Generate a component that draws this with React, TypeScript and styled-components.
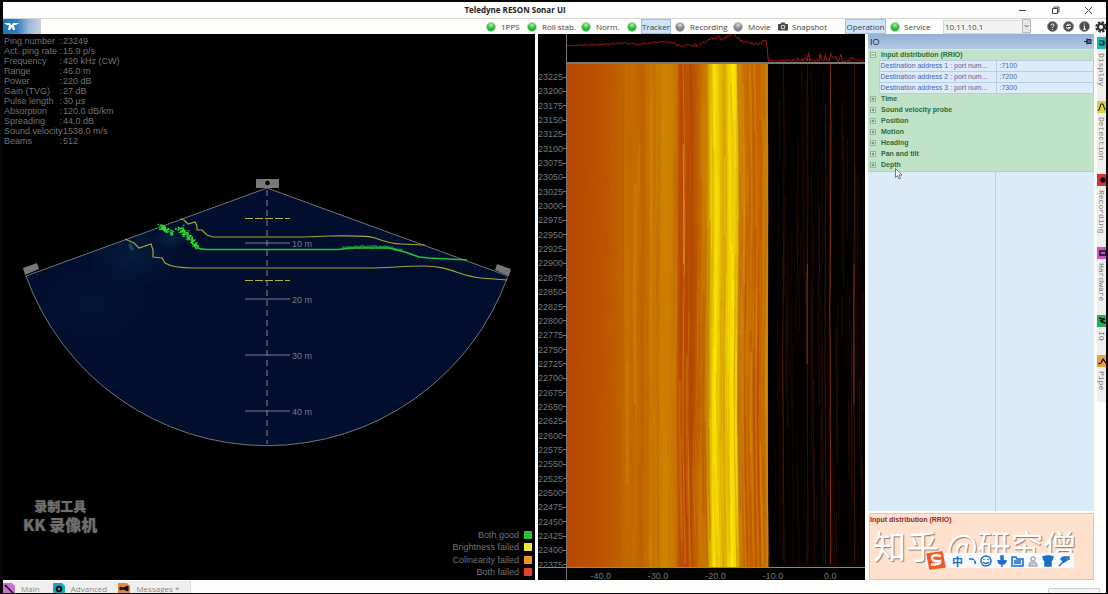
import React from 'react';
import styled, { createGlobalStyle } from 'styled-components';

const sans = '"Liberation Sans", Arial, sans-serif';
const ui = '"Open Sans", "Noto Sans", sans-serif';
const cjk = '"Noto Sans CJK SC", sans-serif';

const GlobalStyle = createGlobalStyle`
  *, *::before, *::after { box-sizing: border-box; }
  body { margin: 0; background: #000; }
  button { margin: 0; padding: 0; border: 0; background: none; font: inherit; color: inherit; }
  svg { display: block; }
`;

/* ---------- window ---------- */

const Window = styled.div`
  display: flex;
  flex-direction: column;
  min-height: 100vh;
  border: solid #060606;
  border-width: 2px 2px 1px 3px;
  background: #fdfdfb;
  overflow: hidden;
  font-family: ${ui};
  color: #444;
`;

const TitleBar = styled.header`
  display: grid;
  grid-template-columns: 1fr auto 1fr;
  align-items: center;
  height: 17px;
  padding-right: 13px;
  border-bottom: 1px solid #d4d4d2;
`;

const Title = styled.h1`
  grid-column: 2;
  margin: 0 0 0 -66px;
  font-size: 8px;
  line-height: 14px;
  font-weight: 700;
  color: #222;
`;

const WindowButtons = styled.div`
  display: flex;
  justify-content: flex-end;
  gap: 24px;
`;

const ToolBar = styled.div`
  display: flex;
  align-items: stretch;
  height: 15px;
  font-size: 8px;
  line-height: 15px;
  white-space: nowrap;
`;

const Logo = styled.div`
  width: 38px;
  margin-right: auto;
  background: linear-gradient(90deg, #1878bb 0, #2f7fbe 14px, #9db8dc 26px, #ccd0e0 38px);
`;

const ToolButton = styled.button<{ $width: number }>`
  display: flex;
  align-items: center;
  gap: 4px;
  flex: none;
  width: ${(p) => p.$width}px;
  line-height: 15px;
  text-align: left;
`;

const ToolLabel = styled.span<{ $active?: boolean }>`
  height: 15px;
  padding: 0 1px;
  background: ${(p) => (p.$active ? '#cde3f7' : 'transparent')};
  box-shadow: ${(p) => (p.$active ? 'inset 0 0 0 1px #9cc3e6' : 'none')};
`;

const Led = styled.span<{ $on?: boolean }>`
  flex: none;
  width: 10px;
  height: 10px;
  border-radius: 50%;
  border: 1px solid ${(p) => (p.$on ? '#9fd8a3' : '#bdbdbd')};
  background: ${(p) =>
    p.$on
      ? 'radial-gradient(circle at 50% 25%, #b4f3ae 0, #35c143 45%, #169a2c 100%)'
      : 'radial-gradient(circle at 50% 25%, #dedede 0, #8e8e8e 45%, #6c6c6c 100%)'};
`;

const ModeButton = styled.button`
  width: 41px;
  background: #cde3f7;
  box-shadow: inset 0 0 0 1px #9cc3e6;
  line-height: 15px;
  margin-right: 4px;
`;

const AddressSelect = styled.select`
  appearance: none;
  width: 88px;
  height: 14px;
  padding: 0 1px;
  border: 1px solid #d8d8d8;
  border-radius: 0;
  background: #f3f3f2;
  font: 8px/12px ${ui};
  color: #444;
`;

const SelectWrap = styled.label`
  position: relative;
  margin-right: 16px;
  svg {
    position: absolute;
    top: 0;
    right: 0;
    pointer-events: none;
  }
`;

const ToolIcons = styled.div`
  display: flex;
  align-items: center;
  gap: 5px;
  width: 59px;
  overflow: hidden;
  button { flex: none; }
`;

/* ---------- workspace ---------- */

const Workspace = styled.main`
  flex: 1;
  display: grid;
  grid-template-columns: minmax(0, 532fr) minmax(0, 327fr) 226px 9px;
  column-gap: 3px;
  min-height: 546px;
`;

const SonarPanel = styled.section`
  position: relative;
  background: #000;
  font-family: ${sans};
`;

const SonarDrawing = styled.svg`
  width: 100%;
  height: auto;
`;

const Stats = styled.dl`
  position: absolute;
  top: 2px;
  left: 1px;
  display: grid;
  grid-template-columns: 59px auto;
  margin: 0;
  font-size: 9px;
  line-height: 10px;
  color: #727272;
  white-space: nowrap;
  dd { margin: 0; }
`;

const StatName = styled.dt<{ $colon: boolean }>`
  display: flex;
  justify-content: space-between;
  padding-right: 1px;
  &::after { content: ${(p) => (p.$colon ? "':'" : 'none')}; }
`;

const Legend = styled.ul`
  position: absolute;
  right: 3px;
  bottom: 2px;
  display: grid;
  margin: 0;
  padding: 0;
  list-style: none;
  font-size: 9px;
  line-height: 12px;
  color: #727272;
`;

const LegendItem = styled.li<{ $color: string }>`
  display: flex;
  align-items: center;
  justify-content: flex-end;
  gap: 5px;
  height: 12px;
  &:nth-child(2) { margin-bottom: 1px; }
  &::after {
    content: '';
    width: 8px;
    height: 8px;
    background: ${(p) => p.$color};
  }
`;

const RecorderMark = styled.div`
  position: absolute;
  left: 20px;
  bottom: 46px;
  font-family: ${cjk};
  font-weight: 900;
  text-align: center;
  color: #6f6f6f;
  text-shadow: 0 0 2px #333;
  p { margin: 0; font-size: 13px; line-height: 16px; }
  strong { display: block; font-size: 16px; line-height: 20px; font-weight: 900; }
`;

const Waterfall = styled.section`
  display: grid;
  grid-template: 28px 2px minmax(0, 1fr) 13px / 28px minmax(0, 1fr);
  background: #000;
  font-family: ${sans};
  color: #777;
`;

const Trace = styled.svg`
  grid-area: 1 / 2;
  width: 100%;
  height: 28px;
  border-left: 1px solid #777;
`;

const Rule = styled.div`
  grid-area: 2 / 2;
  background: #777;
`;

const PingAxis = styled.ol`
  grid-area: 3 / 1;
  display: flex;
  flex-direction: column;
  justify-content: space-between;
  margin: 0;
  padding: 6px 0 0;
  list-style: none;
  font-size: 9px;
  line-height: 14px;
  height: calc(100% + 5px);
  li { display: flex; align-items: center; height: 14px; }
  li::after { content: ''; flex: 1; height: 1px; background: #777; }
`;

const Image = styled.div`
  grid-area: 3 / 2;
  position: relative;
  border-left: 1px solid #777;
  svg { position: absolute; inset: 0; width: 100%; height: 100%; }
`;

const RangeAxis = styled.ol`
  grid-area: 4 / 1 / 5 / 3;
  display: grid;
  grid-template-columns: repeat(5, 1fr);
  position: relative;
  margin: 0;
  padding: 0 6px 0 34px;
  border-top: 1px solid #888;
  list-style: none;
  font-size: 9px;
  line-height: 16px;
  text-align: center;
  &::before { content: ''; position: absolute; left: 28px; top: 0; bottom: 0; width: 1px; background: #777; }
`;

/* ---------- property panel ---------- */

const SidePanel = styled.aside`
  display: flex;
  flex-direction: column;
  font-family: ${sans};
`;

const PanelHeader = styled.header`
  display: flex;
  align-items: center;
  justify-content: space-between;
  height: 15px;
  padding: 0 2px 0 2px;
  background: linear-gradient(#94b0d4, #b0c8e4);
  h2 { margin: 0; font-size: 9px; font-weight: 400; color: #26364c; }
`;

const PropertyTable = styled.table`
  width: 100%;
  table-layout: fixed;
  border-collapse: collapse;
  background: #c0e3c8;
  font-size: 7px;
  line-height: 10px;
  border-top: 1px solid #d6ebdd;
  th, td { height: 11px; padding: 0; white-space: nowrap; text-align: left; font-weight: 400; }
`;

const GutterCell = styled.td`
  background: #c0e3c8;
`;

const PropertyCell = styled.td`
  border: 1px solid #b7cde2;
  background: #dcebfa;
  color: #4d66a5;
  && { padding-left: 1px; }
  & + && { padding-left: 3px; }
`;

const GroupButton = styled.button`
  display: flex;
  align-items: center;
  gap: 5px;
  height: 10px;
  padding-left: 2px;
  line-height: 10px;
  font-weight: 700;
  color: #2d6b3e;
`;

const PropertySpace = styled.div`
  flex: 1;
  display: grid;
  grid-template-columns: 128px 1fr;
  background: #dcebf8;
  border-top: 1px solid #b4cfc6;
  &::before { content: ''; border-right: 1px solid #bfcfdf; }
`;

const HelpBox = styled.section`
  position: relative;
  height: 67px;
  margin: 2px 0 0 1px;
  border: 1px solid #d9c8bd;
  background: #ffe1ce;
  h3 { margin: 0; padding: 1px 0; font-size: 7px; line-height: 10px; color: #8a2f2a; }
`;

const ZhihuMark = styled.div`
  position: absolute;
  left: 3px;
  top: 8px;
  font: 400 33px/46px ${cjk};
  white-space: nowrap;
  color: #fff;
  text-shadow: 1px 1px 1px #8c7c74;
`;

const ImeBar = styled.div`
  position: absolute;
  left: 56px;
  top: 37px;
  display: flex;
  align-items: center;
  gap: 6px;
  width: 148px;
  height: 19px;
  background: linear-gradient(#fff0 2px, #f6fafe 2px 17px, #fff0 17px);
  color: #1d6fc4;
  font: 700 11px/18px ${cjk};
  svg { flex: none; }
`;

const Rail = styled.nav`
  align-self: start;
  margin-top: 1px;
  background: #eeeeec;
  overflow: hidden;
`;

const RailTab = styled.button`
  display: flex;
  flex-direction: column;
  align-items: flex-start;
  gap: 4px;
  padding: 2px 0 12px;
  width: 9px;
  font: 8px/9px "Liberation Mono", monospace;
  color: #777;
  span { writing-mode: vertical-rl; }
  svg { flex: none; }
`;

/* ---------- bottom ---------- */

const BottomBar = styled.footer`
  display: flex;
  justify-content: space-between;
  align-items: flex-end;
  height: 13px;
  padding-right: 6px;
  font-size: 8px;
`;

const BottomTabs = styled.nav`
  display: flex;
  width: 188px;
  height: 12px;
  background: #efefed;
  border-right: 1px solid #dcdcda;
  overflow: hidden;
`;

const BottomTab = styled.button<{ $width: number }>`
  display: flex;
  align-items: center;
  gap: 6px;
  width: ${(p) => p.$width}px;
  height: 15px;
  line-height: 12px;
  color: #888;
  white-space: nowrap;
  svg { flex: none; }
`;

const StatusBox = styled.div`
  width: 52px;
  height: 5px;
  border: 1px solid #ccc;
  border-bottom: 0;
  border-radius: 2px 2px 0 0;
  background: #f4f4f4;
`;

/* ---------- data ---------- */

const stats: [string, string][] = [
  ['Ping number', '23249'],
  ['Act. ping rate', '15.9 p/s'],
  ['Frequency', '420 kHz (CW)'],
  ['Range', '46.0 m'],
  ['Power', '220 dB'],
  ['Gain (TVG)', '27 dB'],
  ['Pulse length', '30 µs'],
  ['Absorption', '120.0 dB/km'],
  ['Spreading', '44.0 dB'],
  ['Sound velocity', '1538.0 m/s'],
  ['Beams', '512'],
];

const legend = [
  ['Both good', '#22c436'],
  ['Brightness failed', '#f2e23a'],
  ['Colinearity failed', '#ef9322'],
  ['Both failed', '#e2402f'],
];

const pings = Array.from({ length: 35 }, (_, i) => 23225 - i * 25);
const ranges = ['-40.0', '-30.0', '-20.0', '-10.0', '0.0'];
const groups = ['Time', 'Sound velocity probe', 'Position', 'Motion', 'Heading', 'Pan and tilt', 'Depth'];

const tools = [
  { label: '1PPS', on: true, width: 41 },
  { label: 'Roll stab.', on: true, width: 54 },
  { label: 'Norm.', on: true, width: 46 },
  { label: 'Tracker', on: true, width: 48, active: true },
  { label: 'Recording', on: false, width: 58 },
  { label: 'Movie', on: false, width: 45 },
];

function random(seed: number) {
  let s = seed;
  return () => {
    s = (s * 16807) % 2147483647;
    return s / 2147483647;
  };
}

/* ---------- drawings ---------- */

const gradientStops: [number, string][] = [
  [0, '#b84900'], [28, '#bb5000'], [48, '#bf5c00'], [60, '#c26a00'], [68, '#c36900'],
  [74, '#bd5e00'], [84, '#c67400'], [100, '#cb8000'], [109, '#c87400'], [113, '#b84a00'],
  [125, '#b54700'], [132, '#c26400'], [140, '#ca8200'], [144, '#e3bd00'], [148, '#f8df00'],
  [153, '#e6bd00'], [158, '#d9a500'], [162, '#ecc900'], [166, '#ffe600'], [169, '#f4dc00'],
  [172, '#cf9000'], [180, '#ca7000'], [190, '#c56000'], [200, '#cd7900'],
];

const streaks = (() => {
  const rnd = random(77);
  const list: { d: string; color: string; opacity: number; width: number }[] = [];
  const wave = (x: number, y0: number, y1: number) => {
    let d = '';
    for (let y = y0; y <= y1; y += 20) {
      const bend = x > 100 && x < 200 ? Math.sin(y / 75) * 1.4 + y / 250 : Math.sin(y / 60) * 0.4;
      d += `${d ? 'L' : 'M'}${(x + bend + rnd() * 0.5).toFixed(1)} ${y}`;
    }
    return d;
  };
  for (let i = 0; i < 420; i++) {
    const x = 200 * Math.pow(rnd(), 0.55);
    const y0 = Math.floor(rnd() * 480) - 60;
    const y1 = y0 + 80 + rnd() * 320;
    let color = rnd() > 0.5 ? '#e09a00' : '#b04600';
    if (x > 142 && x < 171) color = rnd() > 0.35 ? '#ffee10' : '#c98c00';
    const strength = x < 55 ? 0.04 : x < 110 ? 0.06 + rnd() * 0.1 : 0.1 + rnd() * 0.22;
    list.push({ d: wave(x, y0, y1), color, opacity: strength, width: 0.6 + rnd() * 1.4 });
  }
  for (let i = 0; i < 90; i++) {
    const x = 203 + rnd() * 95;
    const y0 = rnd() * 460;
    list.push({ d: wave(x, y0, y0 + 40 + rnd() * 200), color: '#5a2008', opacity: 0.1 + rnd() * 0.3, width: 1 });
  }
  [[241, 0, 503, 0.35], [241, 200, 300, 0.9], [264, 0, 503, 0.95], [259, 40, 503, 0.4], [288, 0, 503, 0.45], [288, 200, 340, 0.8], [217, 0, 503, 0.3]].forEach(
    ([x, y0, y1, opacity]) => list.push({ d: wave(x, y0, y1), color: '#8e3310', opacity, width: 1 }),
  );
  list.push({ d: wave(116, 0, 503), color: '#e58a20', opacity: 0.7, width: 0.8 });
  list.push({ d: wave(115, 80, 210), color: '#ffc060', opacity: 0.6, width: 0.8 });
  list.push({ d: wave(68, 120, 340), color: '#d49000', opacity: 0.45, width: 2 });
  list.push({ d: wave(60, 300, 420), color: '#d08400', opacity: 0.4, width: 4 });
  return list;
})();

const tracePath = (() => {
  const rnd = random(11);
  const shape = [
    [0, 12], [20, 11], [40, 10.5], [55, 9], [75, 10], [98, 7], [106, 9], [114, 12.5], [130, 11],
    [142, 6], [150, 3], [156, 5], [162, 1], [168, 0], [174, 6], [182, 10], [193, 9], [200, 6], [202, 25],
  ];
  let d = '';
  for (let x = 0; x <= 201; x += 1.5) {
    const k = Math.max(1, shape.findIndex((p) => p[0] >= x));
    const [ax, ay] = shape[k - 1];
    const [bx, by] = shape[k];
    const noise = (rnd() - 0.5) * (x > 110 ? 4 : 1.8);
    d += `${d ? 'L' : 'M'}${x} ${(ay + ((by - ay) * (x - ax)) / (bx - ax) + noise).toFixed(1)}`;
  }
  for (let x = 202; x <= 299; x += 1.3) {
    const near = Math.abs(x - 264) < 12 || Math.abs(x - 241) < 3 || Math.abs(x - 287) < 4;
    const h = rnd() * rnd() * (near ? 11 : 4);
    d += `L${x.toFixed(1)} ${(27.5 - h).toFixed(1)}`;
  }
  return d;
})();

const scatter = (() => {
  const rnd = random(5);
  let bright = '';
  for (let i = 0; i < 110; i++) {
    const t = rnd();
    const x = 176 + t * 18 + (rnd() - 0.5) * (9 - t * 6);
    const y = 193 + t * 20 + (rnd() - 0.5) * 5;
    bright += `M${x.toFixed(1)} ${y.toFixed(1)}h${(0.8 + rnd() * 1.6).toFixed(1)}`;
  }
  for (let i = 0; i < 60; i++) {
    const t = rnd();
    const x = 156 + t * 13 + (rnd() - 0.5) * 4;
    const y = 192 + t * 8 + (rnd() - 0.5) * 5;
    bright += `M${x.toFixed(1)} ${y.toFixed(1)}h${(0.8 + rnd() * 1.6).toFixed(1)}`;
  }
  let ridge = '';
  for (let i = 0; i < 60; i++) {
    const x = 340 + i;
    const y = 214 - Math.sin((i / 60) * 3.1) * 1.5 + (i > 45 ? (i - 45) / 5 : 0);
    ridge += `M${x} ${(y - rnd() * 2).toFixed(1)}v${(1 + rnd() * 2).toFixed(1)}`;
  }
  return { bright, ridge };
})();

function Fan() {
  return (
    <SonarDrawing viewBox="0 0 532 546" role="img" aria-label="Sonar wedge">
      <defs>
        <clipPath id="wedge">
          <path d="M264 154L23 242A256 256 0 0 0 505 242Z" />
        </clipPath>
        <radialGradient id="haze">
          <stop offset="0" stopColor="#0c3a5c" stopOpacity="0.45" />
          <stop offset="1" stopColor="#0c3a5c" stopOpacity="0" />
        </radialGradient>
      </defs>
      <path d="M264 154L23 242A256 256 0 0 0 505 242Z" fill="#010e2d" />
      <g clipPath="url(#wedge)">
        <ellipse cx="130" cy="222" rx="50" ry="36" fill="url(#haze)" opacity="0.7" />
        <ellipse cx="90" cy="270" rx="60" ry="40" fill="url(#haze)" opacity="0.4" />
        <ellipse cx="128" cy="213" rx="2" ry="4" fill="#2e6f86" opacity="0.5" transform="rotate(-25 128 213)" />
        <ellipse cx="168" cy="205" rx="18" ry="10" fill="url(#haze)" />
      </g>
      <g fill="none" stroke="#727476">
        <path d="M264 154L23 242A256 256 0 0 0 505 242Z" />
        <path d="M264 156V410" stroke="#85888f" strokeDasharray="6 4" />
        <path d="M242 209H287M242 265H287M242 321H287M242 377H287" stroke="#767c90" />
      </g>
      <g fill="none" stroke="#a8a632" strokeWidth="1.2">
        <path d="M242 184.500H287M242 246.500H287" stroke="#b5b13c" strokeDasharray="8 2" />
        <path d="M177 185L181 186L185 190L192 188L194 192L194 196L199 196L204 201L210 203H300L327 202C345 202 364 201 372 204S388 210 398 210L422 211" />
        <path d="M122 205L131 209L136 214L148 210L150 216L150 223L159 224L162 229Q170 234 190 234H364C385 234 400 232 420 232C448 232 455 242 478 244L504 246" />
      </g>
      <path d={scatter.bright} stroke="#2edc2c" strokeWidth="1.1" />
      <path d={scatter.ridge} stroke="#2aa83a" />
      <path d="M192 213Q197 215.500 204 215.500H334L350 214H386L402 218L416 223L426 224L464 226" fill="none" stroke="#1fc43b" strokeWidth="1.700" />
      <g fill="#77777a">
        <path d="M253 145h23v9h-23z" />
        <path d="M20 234l14-5 2 6-14 6zM494 230l14 5-2 7-14-6z" />
      </g>
      <circle cx="264.500" cy="149" r="3" fill="#000" stroke="#aaa" strokeWidth="0.800" />
      <g fill="#777b82" fontFamily={sans} fontSize="9">
        <text x="289" y="213">10 m</text>
        <text x="289" y="269">20 m</text>
        <text x="289" y="325">30 m</text>
        <text x="289" y="381">40 m</text>
      </g>
    </SonarDrawing>
  );
}

function BackscatterImage() {
  return (
    <svg viewBox="0 0 299 503" preserveAspectRatio="none" role="img" aria-label="Backscatter waterfall">
      <defs>
        <linearGradient id="swath" gradientUnits="userSpaceOnUse" x1="0" x2="201" y1="0" y2="0">
          {gradientStops.map(([x, c]) => (
            <stop key={x} offset={x / 201} stopColor={c} />
          ))}
        </linearGradient>
        <filter id="grain" x="0" y="0" width="100%" height="100%">
          <feTurbulence type="fractalNoise" baseFrequency="0.22 0.003" numOctaves="3" seed="4" />
          <feColorMatrix values="0 0 0 0 0.85  0 0 0 0 0.6  0 0 0 0 0  1.6 0 0 0 -0.75" />
        </filter>
      </defs>
      <rect width="299" height="503" fill="#030100" />
      <rect width="201" height="503" fill="url(#swath)" />
      <rect x="56" width="144" height="503" filter="url(#grain)" opacity="0.25" />
      {streaks.map((s, i) => (
        <path key={i} d={s.d} fill="none" stroke={s.color} strokeOpacity={s.opacity} strokeWidth={s.width} />
      ))}
      <path d="M201 0V503" stroke="#b59a4a" />
    </svg>
  );
}

const Camera = () => (
  <svg width="10" height="9" viewBox="0 0 10 9">
    <path d="M0 2h2.500l1-1.500h3L7.500 2H10v6.500H0z" fill="#4a4a4a" />
    <circle cx="5" cy="5" r="2.300" fill="#ddd" />
    <circle cx="5" cy="5" r="1.300" fill="#444" />
  </svg>
);

const roundIcons = [
  { name: 'Help', art: <path d="M4 4.500q0-1.500 1.600-1.500T7 4.300q0 1-1.400 1.700v.8M5.600 8v1" /> },
  { name: 'Refresh', art: <path d="M8 4.500Q5.500 1.800 3.500 4.500H6M3 6.500q2.500 2.700 4.500 0H5" /> },
  { name: 'Information', art: <path d="M5.500 2.500v1M4.500 5h1v3M4 8.300h3" /> },
];

function Tools() {
  return (
    <ToolBar>
      <Logo>
        <svg width="20" height="15" viewBox="0 0 20 15" aria-label="Teledyne">
          <path d="M1 4h6l1 2h1l1-2h6l-3 2h-2l1 5h-2L9 8l-2 3H5l1-5H4z" fill="#fff" />
        </svg>
      </Logo>
      {tools.map((t) => (
        <ToolButton key={t.label} $width={t.width}>
          <Led $on={t.on} />
          <ToolLabel $active={t.active}>{t.label}</ToolLabel>
        </ToolButton>
      ))}
      <ToolButton $width={67}>
        <Camera />
        <span>Snapshot</span>
      </ToolButton>
      <ModeButton>Operation</ModeButton>
      <ToolButton $width={53}>
        <Led $on />
        <span>Service</span>
      </ToolButton>
      <SelectWrap>
        <AddressSelect aria-label="Address" defaultValue="a">
          <option value="a">10.11.10.1</option>
        </AddressSelect>
        <svg width="9" height="14" viewBox="0 0 9 14">
          <path d="M.5.500h8v13h-8z" fill="#e6e6e6" stroke="#bbb" />
          <path d="M2.500 6l2 2 2-2" fill="none" stroke="#666" />
        </svg>
      </SelectWrap>
      <ToolIcons>
        {roundIcons.map((r) => (
          <button key={r.name} aria-label={r.name}>
            <svg width="11" height="11" viewBox="0 0 11 11" fill="none" stroke="#fff">
              <circle cx="5.500" cy="5.500" r="5" fill="#4c4c4c" stroke="#888" strokeWidth="0.800" />
              {r.art}
            </svg>
          </button>
        ))}
        <button aria-label="Settings">
          <svg width="12" height="12" viewBox="0 0 12 12">
            <circle cx="6" cy="6" r="4" fill="none" stroke="#333" strokeWidth="3.500" strokeDasharray="2.100 1.040" />
            <circle cx="6" cy="6" r="3" fill="#fff" stroke="#333" strokeWidth="2" />
          </svg>
        </button>
      </ToolIcons>
    </ToolBar>
  );
}

const railTabs = [
  { label: 'Display', color: '#12bdb8', art: <path d="M2 4h5v4H3V6M5 6h2" /> },
  { label: 'Detection', color: '#d9cf3f', art: <path d="M1 9h1l2-6h2l2 6" /> },
  { label: 'Recording', color: '#cf3530', art: <circle cx="6" cy="6" r="2.300" fill="#111" /> },
  { label: 'Hardware', color: '#d052c8', art: <path d="M3 4h6v4H3z" strokeWidth="1.500" /> },
  { label: 'IO', color: '#22b35a', art: <path d="M2 3l4 1-1 3 4 1M3 6l5-2" strokeWidth="1.500" /> },
  { label: 'Pipe', color: '#eaa33a', art: <path d="M1 9l3-1 2-4 3 4" strokeWidth="1.300" /> },
];

const bottomTabs = [
  { label: 'Main', color: '#cf6fd2', width: 50, art: <path d="M2 2l3 3 5 5M3 2v2" strokeWidth="1.500" /> },
  { label: 'Advanced', color: '#16a8be', width: 66, art: <circle cx="6" cy="6" r="2.300" strokeWidth="2" fill="#16a8be" /> },
  { label: 'Messages *', color: '#e5883c', width: 72, art: <path d="M2 4v3l3-1 5 2V3L5 5z" fill="#111" /> },
];

function Toggle({ open }: { open?: boolean }) {
  return (
    <svg width="6" height="6" viewBox="0 0 6 6" fill="none">
      <path d="M.5.500h5v5h-5z" fill="#dcefe2" stroke="#90b39c" />
      <path d={open ? 'M1.500 3h3' : 'M1.500 3h3M3 1.500v3'} stroke="#3d6d4b" strokeWidth="0.800" />
    </svg>
  );
}

const Cursor = styled.svg`
  position: absolute;
  left: 27px;
  top: 134px;
`;

const PanelBody = styled.div`
  position: relative;
  display: flex;
  flex-direction: column;
  flex: 1;
`;

function Properties() {
  return (
    <SidePanel>
      <PanelBody>
        <PanelHeader>
          <h2>IO</h2>
          <button aria-label="Pin panel">
            <svg width="8" height="7" viewBox="0 0 8 7">
              <path d="M0 3.500h3" stroke="#222a44" />
              <path d="M3 .5v6M3 1.500h4v4H3z" fill="#5a6484" stroke="#222a44" />
            </svg>
          </button>
        </PanelHeader>
        <PropertyTable>
          <colgroup>
            <col style={{ width: 11 }} />
            <col style={{ width: 117 }} />
            <col />
          </colgroup>
          <tbody>
            <tr>
              <th colSpan={3}>
                <GroupButton><Toggle open />Input distribution (RRIO)</GroupButton>
              </th>
            </tr>
            {[1, 2, 3].map((n) => (
              <tr key={n}>
                <GutterCell />
                <PropertyCell>Destination address {n} : port num...</PropertyCell>
                <PropertyCell>:7{n}00</PropertyCell>
              </tr>
            ))}
            {groups.map((g) => (
              <tr key={g}>
                <th colSpan={3}>
                  <GroupButton><Toggle />{g}</GroupButton>
                </th>
              </tr>
            ))}
          </tbody>
        </PropertyTable>
        <PropertySpace />
        <Cursor width="8" height="12" viewBox="0 0 8 12">
          <path d="M.5.500v9l2-2 1.500 3.500 1.500-.7L4 7h3z" fill="#fff" stroke="#555" strokeWidth="0.800" />
        </Cursor>
      </PanelBody>
      <HelpBox>
        <h3>Input distribution (RRIO)</h3>
        <ZhihuMark>知乎 @研究僧</ZhihuMark>
        <ImeBar>
          <svg width="20" height="19" viewBox="0 0 20 19">
            <path d="M1 3l15-2 3 15-15 2z" fill="#f05a22" stroke="#f05a22" strokeWidth="1.500" strokeLinejoin="round" />
            <path d="M15 5Q6 3 6 7t8 3Q15 14 5 13.500" fill="none" stroke="#fff" strokeWidth="2.500" />
          </svg>
          <span>中</span>
          <svg width="104" height="14" viewBox="0 0 104 14" fill="none" stroke="#1d6fc4" strokeWidth="1.500">
            <path d="M0 5h3q1 0 2 1M5 7q2 0 1 3" />
            <circle cx="17" cy="7" r="5" />
            <path d="M14 8q3 3 6 0M15 5v1M19 5v1" />
            <path d="M32 2h2v5h-2zM29 6q0 4 4 4t4-4M33 10v3" fill="#1d6fc4" />
            <path d="M43 3h4l1 2h6v7H43zM45 7h7M45 9h7" fill="#d7e8f8" />
            <circle cx="64" cy="5" r="2" stroke="#a9b2bb" />
            <path d="M60 12q0-4 4-4t4 4z" stroke="#a9b2bb" fill="#c5ccd2" />
            <path d="M74 3l3-1h4l3 1-1 3h-1v6h-6V6h-1z" fill="#1d6fc4" />
            <path d="M90 12l5-5M94 3l4 3-3 2-3-3zM95 3h5v3" fill="#1d6fc4" />
          </svg>
        </ImeBar>
      </HelpBox>
    </SidePanel>
  );
}

export default function App() {
  return (
    <Window>
      <GlobalStyle />
      <TitleBar>
        <Title>Teledyne RESON Sonar UI</Title>
        <WindowButtons>
          <button aria-label="Minimize">
            <svg width="9" height="9" viewBox="0 0 9 9"><path d="M1 4.500h7" stroke="#444" /></svg>
          </button>
          <button aria-label="Restore">
            <svg width="9" height="9" viewBox="0 0 9 9" fill="none" stroke="#444"><path d="M1.500 2.500h5v5h-5zM3 2V1h5v5H7" /></svg>
          </button>
          <button aria-label="Close">
            <svg width="9" height="9" viewBox="0 0 9 9"><path d="M1 1l7 7M8 1L1 8" stroke="#444" /></svg>
          </button>
        </WindowButtons>
      </TitleBar>
      <Tools />
      <Workspace>
        <SonarPanel>
          <Fan />
          <Stats>
            {stats.map(([k, v]) => (
              <React.Fragment key={k}>
                <StatName $colon={k !== 'Sound velocity'}>{k}</StatName>
                <dd>{v}</dd>
              </React.Fragment>
            ))}
          </Stats>
          <RecorderMark>
            <p>录制工具</p>
            <strong>KK 录像机</strong>
          </RecorderMark>
          <Legend>
            {legend.map(([label, color]) => (
              <LegendItem key={label} $color={color}>{label}</LegendItem>
            ))}
          </Legend>
        </SonarPanel>
        <Waterfall>
          <Trace viewBox="0 0 299 28" preserveAspectRatio="none">
            <path d={tracePath} fill="none" stroke="#c01818" strokeWidth="0.900" />
          </Trace>
          <Rule />
          <PingAxis>
            {pings.map((p) => <li key={p}>{p}</li>)}
          </PingAxis>
          <Image><BackscatterImage /></Image>
          <RangeAxis>
            {ranges.map((r) => <li key={r}>{r}</li>)}
          </RangeAxis>
        </Waterfall>
        <Properties />
        <Rail>
          {railTabs.map((t) => (
            <RailTab key={t.label}>
              <svg width="12" height="12" viewBox="0 0 12 12" fill="none" stroke="#111">
                <path d="M0 0h9l3 3v9H0z" fill={t.color} stroke="none" />
                {t.art}
              </svg>
              <span>{t.label}</span>
            </RailTab>
          ))}
        </Rail>
      </Workspace>
      <BottomBar>
        <BottomTabs>
          {bottomTabs.map((t) => (
            <BottomTab key={t.label} $width={t.width}>
              <svg width="12" height="12" viewBox="0 0 12 12" fill="none" stroke="#111">
                <path d="M0 0h9l3 3v9H0z" fill={t.color} stroke="none" />
                {t.art}
              </svg>
              {t.label}
            </BottomTab>
          ))}
        </BottomTabs>
        <StatusBox />
      </BottomBar>
    </Window>
  );
}
